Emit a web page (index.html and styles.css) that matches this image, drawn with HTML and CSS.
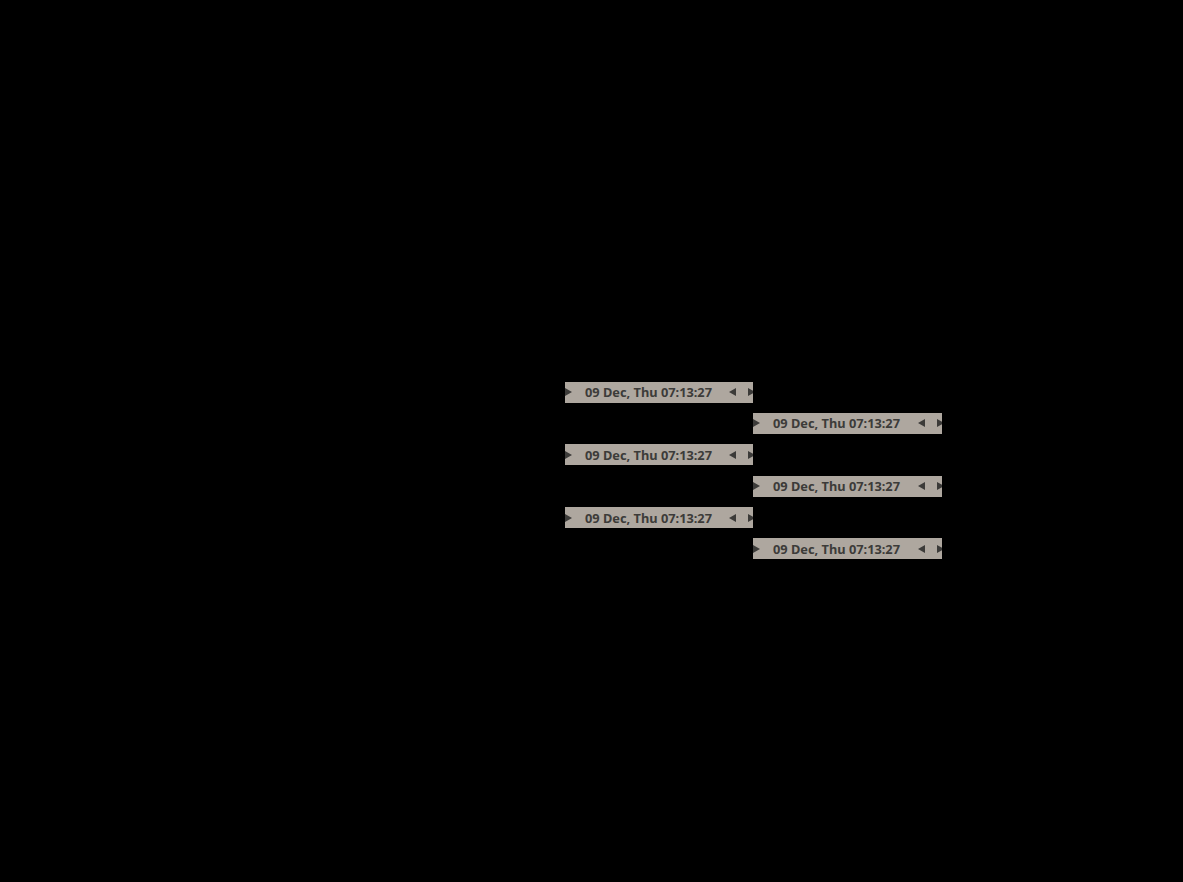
FILE: index.html
```html
<!DOCTYPE html>
<html>
<head>
<meta charset="utf-8">
<link rel="stylesheet" href="styles.css">
</head>
<body>
<div class="stack">
  <div class="bar left"><span class="play"></span><span class="time">09 Dec, Thu 07:13:27</span><span class="prev"></span><span class="next"></span></div>
  <div class="bar right"><span class="play"></span><span class="time">09 Dec, Thu 07:13:27</span><span class="prev"></span><span class="next"></span></div>
  <div class="bar left"><span class="play"></span><span class="time">09 Dec, Thu 07:13:27</span><span class="prev"></span><span class="next"></span></div>
  <div class="bar right"><span class="play"></span><span class="time">09 Dec, Thu 07:13:27</span><span class="prev"></span><span class="next"></span></div>
  <div class="bar left"><span class="play"></span><span class="time">09 Dec, Thu 07:13:27</span><span class="prev"></span><span class="next"></span></div>
  <div class="bar right"><span class="play"></span><span class="time">09 Dec, Thu 07:13:27</span><span class="prev"></span><span class="next"></span></div>
</div>
</body>
</html>
```
FILE: styles.css
```css
html, body {
  margin: 0;
  padding: 0;
  background: #000;
  height: 100%;
}
.stack {
  display: flex;
  flex-direction: column;
  gap: 10.4px;
  padding-top: 381.5px;
  padding-left: 565px;
  width: 377px;
}
.bar {
  width: 188px;
  height: 21px;
  background: #aea79f;
  display: flex;
  align-items: center;
  overflow: hidden;
  font-family: "Noto Sans", "DejaVu Sans", sans-serif;
  font-weight: bold;
  font-size: 12.8px;
  color: #3c3b39;
}
.bar.right { margin-left: 188px; width: 189px; }
.play, .next {
  width: 0; height: 0;
  border-top: 4px solid transparent;
  border-bottom: 4px solid transparent;
  border-left: 7px solid #3c3b39;
}
.play { margin-left: 0; }
.time { margin-left: 13px; white-space: nowrap; }
.prev {
  width: 0; height: 0;
  border-top: 4px solid transparent;
  border-bottom: 4px solid transparent;
  border-right: 7px solid #3c3b39;
  margin-left: auto;
}
.next { margin-left: 12px; margin-right: -2px; }
```
